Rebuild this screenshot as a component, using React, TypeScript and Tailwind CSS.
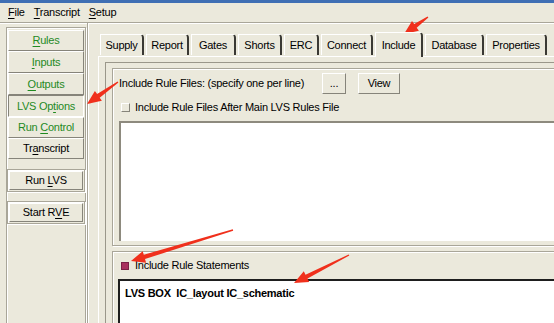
import React from "react";

const raised = "border border-t-white border-l-white border-b-[#86847a] border-r-[#86847a]";
const sunken = "border border-t-[#86847a] border-l-[#86847a] border-b-white border-r-white";
const groove = "border border-[#a9a699] shadow-[inset_1px_1px_0_#fff,1px_1px_0_#fff]";

const tabs = [
  { label: "Supply", w: "w-[44px]" },
  { label: "Report", w: "w-[43px]" },
  { label: "Gates", w: "w-[45px]" },
  { label: "Shorts", w: "w-[44px]" },
  { label: "ERC", w: "w-[35px]" },
  { label: "Connect", w: "w-[52px]" },
  { label: "Include", w: "w-[48px]", active: true },
  { label: "Database", w: "w-[59px]" },
  { label: "Properties", w: "w-[61px]" },
];

const navButtons = [
  { pre: "", key: "R", post: "ules", h: "h-[21px]", green: true },
  { pre: "", key: "I", post: "nputs", h: "h-[22px]", green: true },
  { pre: "", key: "O", post: "utputs", h: "h-[22px]", green: true },
  { pre: "LVS Op", key: "t", post: "ions", h: "h-[22px]", green: true, pressed: true },
  { pre: "Run ", key: "C", post: "ontrol", h: "h-[21px]", green: true },
  { pre: "Tr", key: "a", post: "nscript", h: "h-[21px]" },
];

function Key({ pre, k, post }: { pre: string; k: string; post: string }) {
  return (
    <span>
      {pre}
      <span className="underline underline-offset-[2px]">{k}</span>
      {post}
    </span>
  );
}

// red annotation arrows, tapered shaft + head
function arrowPoints(x1: number, y1: number, x2: number, y2: number) {
  const dx = x2 - x1;
  const dy = y2 - y1;
  const len = Math.hypot(dx, dy);
  const ux = dx / len;
  const uy = dy / len;
  const px = -uy;
  const py = ux;
  const headLen = 14;
  const headW = 6;
  const neckW = 2.2;
  const tailW = 0.7;
  const bx = x2 - ux * headLen;
  const by = y2 - uy * headLen;
  const pts = [
    [x1 + px * tailW, y1 + py * tailW],
    [bx + px * neckW, by + py * neckW],
    [bx + px * headW, by + py * headW],
    [x2, y2],
    [bx - px * headW, by - py * headW],
    [bx - px * neckW, by - py * neckW],
    [x1 - px * tailW, y1 - py * tailW],
  ];
  return pts.map((p) => `${p[0].toFixed(1)},${p[1].toFixed(1)}`).join(" ");
}

const arrows = [
  [118, 82, 87, 104],
  [428, 17, 404, 34],
  [233, 230, 131, 261],
  [349, 255, 294, 283],
];

export default function App() {
  return (
    <div className="relative w-[554px] h-[323px] overflow-hidden bg-[#ebe9dc] text-black text-[11px] tracking-[-0.25px] font-['Liberation_Sans',Arial,sans-serif] leading-none">
      {/* title bar edge */}
      <div className="h-[3px] bg-[#3f6fb4]" />

      {/* menu bar */}
      <div className="flex h-[20px] items-center gap-[9px] pl-[8px] border-b border-b-[#a9a699] shadow-[0_1px_0_#fff]">
        <Key pre="" k="F" post="ile" />
        <Key pre="" k="T" post="ranscript" />
        <Key pre="" k="S" post="etup" />
      </div>

      <div className="flex h-[300px]">
        {/* left navigation */}
        <div className="w-[88px] shrink-0 border-r border-r-[#a9a699] pt-[4px]">
          <div className={`ml-[6px] w-[80px] h-[320px] ${groove} pt-[2px]`}>
            <div className="flex flex-col">
              {navButtons.map((b) => (
                <div
                  key={b.post}
                  className={`mx-[1px] flex items-center justify-center ${b.h} ${b.pressed ? sunken : raised} ${b.green ? "text-[#1f8a1f]" : ""}`}
                >
                  <Key pre={b.pre} k={b.key} post={b.post} />
                </div>
              ))}
            </div>
            <div className={`mt-[10px] h-[23px] ${groove} flex`}>
              <div className={`flex-1 m-[1px] flex items-center justify-center ${raised}`}>
                <Key pre="Run " k="L" post="VS" />
              </div>
            </div>
            <div className={`mt-[9px] h-[23px] ${groove} flex`}>
              <div className={`flex-1 m-[1px] flex items-center justify-center ${raised}`}>
                <Key pre="Start R" k="V" post="E" />
              </div>
            </div>
          </div>
        </div>

        {/* right content */}
        <div className="flex-1 border-l border-l-white pl-[9px] pt-[9px]">
          <div className="flex items-end gap-[2px] pl-[2px] h-[24px]">
            {tabs.map((t) => (
              <div
                key={t.label}
                className={`shrink-0 ${t.w} flex items-center justify-center border-l border-t border-l-white border-t-white border-r-2 border-r-[#3a3934] rounded-tr-[4px] bg-[#ebe9dc] ${t.active ? "relative z-10 h-[25px] -mb-px" : "h-[21px] mb-px"}`}
              >
                {t.label}
              </div>
            ))}
          </div>

          <div className="w-[600px] h-[300px] border-t border-l border-t-white border-l-white pl-[6px] pt-[5px]">
            <div className="h-full border-t border-l border-t-[#9a978a] border-l-[#9a978a] pl-[6px] pt-[5px]">
              {/* include rule files */}
              <div className={`h-[178px] ${groove} pl-[6px] pt-[4px]`}>
                <div className="flex h-[21px] items-center">
                  <div className="w-[203px]">Include Rule Files: (specify one per line)</div>
                  <div className={`w-[24px] h-[21px] flex items-center justify-center ${raised}`}>...</div>
                  <div className={`ml-[12px] w-[42px] h-[21px] flex items-center justify-center ${raised}`}>View</div>
                </div>
                <div className="mt-[5px] flex h-[16px] items-center">
                  <div className={`ml-[2px] w-[9px] h-[9px] ${raised}`} />
                  <div className="ml-[5px]">Include Rule Files After Main LVS Rules File</div>
                </div>
                <div className="mt-[6px] h-[120px] bg-white border-t-2 border-l-2 border-t-[#8d8a7e] border-l-[#8d8a7e]" />
              </div>

              {/* include rule statements */}
              <div className={`mt-[5px] h-[200px] ${groove} pl-[5px] pt-[9px]`}>
                <div className="flex h-[9px] items-center">
                  <div className="ml-[3px] w-[8px] h-[8px] bg-[#a8305e] border border-[#7a2046]" />
                  <div className="ml-[6px]">Include Rule Statements</div>
                </div>
                <div className="mt-[9px] h-[100px] bg-white border-t-2 border-l-2 border-t-[#1e1e1e] border-l-[#1e1e1e] pl-[5px] pt-[7px]">
                  <div className="font-bold whitespace-pre">LVS BOX  IC_layout IC_schematic</div>
                </div>
              </div>
            </div>
          </div>
        </div>
      </div>

      {/* annotation arrows */}
      <svg className="absolute inset-0 pointer-events-none" width="554" height="323" viewBox="0 0 554 323">
        {arrows.map((a, i) => (
          <polygon key={i} points={arrowPoints(a[0], a[1], a[2], a[3])} fill="#f0301c" />
        ))}
      </svg>
    </div>
  );
}
